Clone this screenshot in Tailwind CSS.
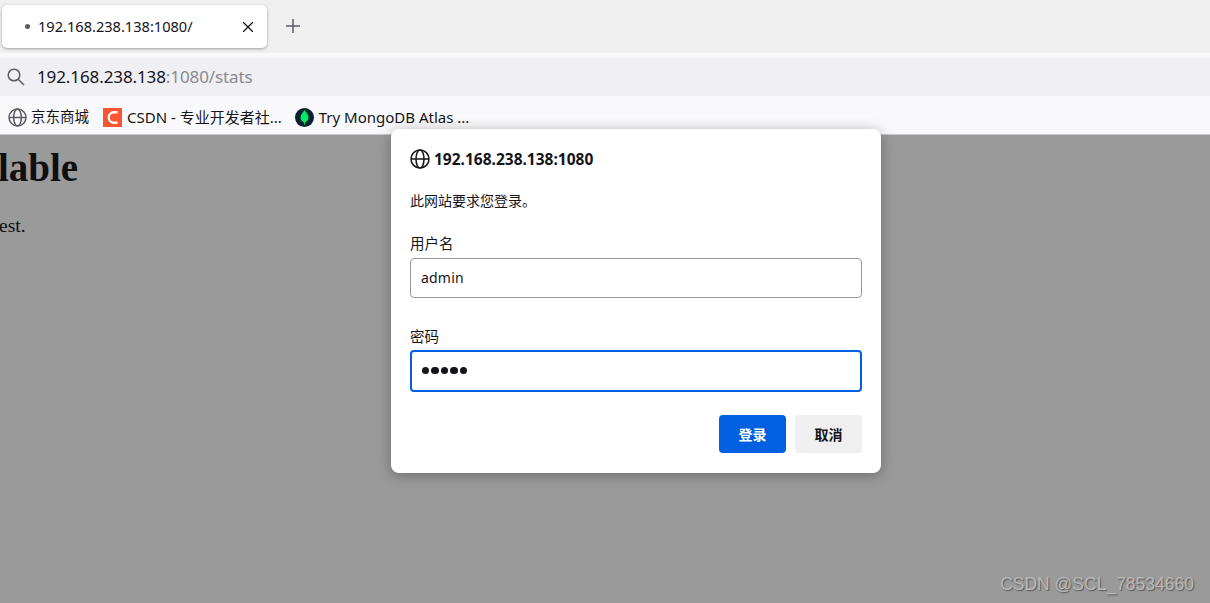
<!DOCTYPE html>
<html lang="en">
<head>
  <meta charset="UTF-8" />
  <title>192.168.238.138:1080/</title>
  <script src="https://cdn.jsdelivr.net/npm/@tailwindcss/browser@4"></script>
</head>
<body class="w-[1210px] h-[603px] overflow-hidden relative bg-[#9a9a9b] font-['Noto_Sans','Noto_Sans_CJK_SC',sans-serif] text-[#15141a]">
  <!-- Tab strip -->
  <div class="h-[53px] bg-[#f0f0f0] flex items-start pl-[2px] pt-[5px]">
    <div class="w-[265px] h-[43px] bg-white rounded-[5px] shadow-[0_1px_3px_rgba(0,0,0,0.35)] flex items-center">
      <span class="w-[5px] h-[5px] rounded-full bg-[#5b5b66] ml-[23px]"></span>
      <span class="ml-[8px] text-[14.6px]">192.168.238.138:1080/</span>
      <svg class="ml-auto mr-[14px]" width="10" height="10" viewBox="0 0 10 10" fill="none" stroke="#15141a" stroke-width="1.3"><path d="M0 0l10 10M10 0L0 10" /></svg>
    </div>
    <svg class="ml-[19px] mt-[14px]" width="14" height="14" viewBox="0 0 14 14" fill="none" stroke="#5b5b66" stroke-width="1.5"><path d="M7 0v14M0 7h14" /></svg>
  </div>
  <div class="h-[5px] bg-[#f9f9fb]"></div>

  <!-- Address bar -->
  <div class="h-[38px] bg-[#efeff4] flex items-center pl-[7px]">
    <svg width="18" height="18" viewBox="0 0 18 18" fill="none" stroke="#5b5b66" stroke-width="1.5"><circle cx="7" cy="7" r="5.8" /><path d="M11.500 11.500l5.500 5.500" /></svg>
    <span class="ml-[12px] text-[17px] tracking-[-0.1px]">192.168.238.138<span class="text-[#8a8a90]">:1080/stats</span></span>
  </div>

  <!-- Bookmarks -->
  <div class="h-[39px] bg-[#f9f9fb] border-b border-[#c8c8ca] flex items-center text-[15px] pl-[8px] pt-[4px]">
    <svg width="19" height="19" viewBox="0 0 19 19" fill="none" stroke="#5b5b66" stroke-width="1.5"><circle cx="9.500" cy="9.500" r="8.500" /><ellipse cx="9.500" cy="9.500" rx="3.800" ry="8.500" /><path d="M1 9.500h17" /></svg>
    <span class="ml-[4px] text-[14.500px]">京东商城</span>
    <span class="ml-[14px] w-[19px] h-[19px] bg-[#fc5531] flex items-center justify-center">
      <svg width="13" height="15" viewBox="0 0 13 15" fill="none" stroke="#fff" stroke-width="2.4"><path d="M11.500 2.200H8a5.300 5.300 0 0 0 0 10.600h3.500" /></svg>
    </span>
    <span class="ml-[5px]">CSDN - 专业开发者社...</span>
    <span class="ml-[13px] w-[19px] h-[19px] rounded-full bg-[#02232f] flex items-center justify-center">
      <svg width="9" height="15" viewBox="0 0 9 15"><path d="M4.500 0C6 2.200 8.500 4.500 8.500 7.600c0 2.500-1.600 4-3.500 4.800L4.700 15h-.5L4 12.400C2 11.600.5 10.100.5 7.600.5 4.500 3 2.200 4.500 0z" fill="#00ed64" /></svg>
    </span>
    <span class="ml-[5px]">Try MongoDB Atlas ...</span>
  </div>

  <!-- Page behind the dialog -->
  <div class="font-['Liberation_Serif',serif] text-[#0f0f0f]">
    <h1 class="text-[39px] leading-[45px] font-bold ml-[-2px] mt-[10px]">lable</h1>
    <p class="text-[19.500px] leading-[22px] ml-[-1px] mt-[25px]">est.</p>
  </div>

  <!-- Login dialog -->
  <div class="absolute left-[391px] top-[129px] w-[490px] h-[344px] bg-white rounded-[8px] shadow-[0_2px_14px_rgba(0,0,0,0.3)] px-[19px]">
    <div class="flex items-center mt-[20px] h-[20px]">
      <svg width="20" height="20" viewBox="0 0 20 20" fill="none" stroke="#15141a" stroke-width="1.5"><circle cx="10" cy="10" r="9" /><ellipse cx="10" cy="10" rx="4" ry="9" /><path d="M1 10h18" /></svg>
      <span class="ml-[4px] text-[15.500px] font-bold leading-[20px]">192.168.238.138:1080</span>
    </div>
    <p class="text-[14px] leading-[18px] mt-[23px]">此网站要求您登录。</p>
    <label class="block text-[14.500px] leading-[18px] mt-[24px]">用户名</label>
    <div class="mt-[6px] h-[40px] w-[452px] border border-[#9a9a9c] rounded-[4px] flex items-center pl-[10px] pb-[2px] text-[14px] tracking-[0.2px]">admin</div>
    <label class="block text-[14.500px] leading-[18px] mt-[29px]">密码</label>
    <div class="mt-[5px] h-[41.500px] w-[452px] border-2 border-[#0060df] rounded-[4px] flex items-center gap-[2px] pl-[10px]">
      <span class="w-[7.400px] h-[7.400px] rounded-full bg-[#15141a]"></span>
      <span class="w-[7.400px] h-[7.400px] rounded-full bg-[#15141a]"></span>
      <span class="w-[7.400px] h-[7.400px] rounded-full bg-[#15141a]"></span>
      <span class="w-[7.400px] h-[7.400px] rounded-full bg-[#15141a]"></span>
      <span class="w-[7.400px] h-[7.400px] rounded-full bg-[#15141a]"></span>
    </div>
    <div class="flex justify-end gap-[9px] mt-[23.500px] w-[452px]">
      <button class="w-[67px] h-[38px] rounded-[4px] bg-[#0060df] text-white text-[14px] font-bold">登录</button>
      <button class="w-[67px] h-[38px] rounded-[4px] bg-[#efefef] text-[14px] font-bold">取消</button>
    </div>
  </div>

  <!-- Watermark -->
  <div class="absolute right-[16px] top-[574px] font-['Liberation_Sans',sans-serif] text-[17.500px] leading-[20px] text-[#b9b9ba] [text-shadow:1px_1px_1px_rgba(60,60,60,0.7)]">CSDN @SCL_78534660</div>
</body>
</html>
